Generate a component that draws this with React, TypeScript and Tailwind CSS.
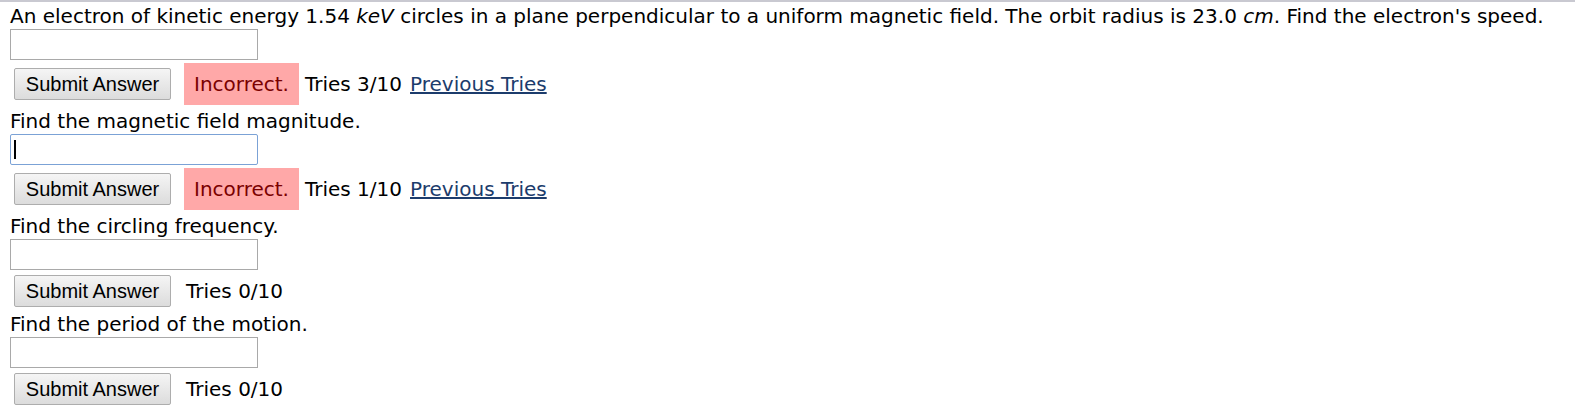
import React from "react";

type Question = {
  text: React.ReactNode;
  tries: string;
  incorrect?: boolean;
  focused?: boolean;
};

const questions: Question[] = [
  {
    text: (
      <>
        An electron of kinetic energy 1.54 <i>keV</i> circles in a plane perpendicular to a uniform
        magnetic field. The orbit radius is 23.0 <i>cm</i>. Find the electron's speed.
      </>
    ),
    tries: "3/10",
    incorrect: true,
  },
  { text: "Find the magnetic field magnitude.", tries: "1/10", incorrect: true, focused: true },
  { text: "Find the circling frequency.", tries: "0/10" },
  { text: "Find the period of the motion.", tries: "0/10" },
];

const AnswerBox = ({ focused }: { focused?: boolean }) => (
  <div
    className={`h-[31px] w-[248px] bg-white flex items-center pl-[3px] ${
      focused ? "border border-[#7ba2d6] rounded-[2px]" : "border border-[#a9a9a9]"
    }`}
  >
    {focused && <span className="block w-[2px] h-[19px] bg-black" />}
  </div>
);

const SubmitButton = () => (
  <button className="ml-[4px] h-[32px] w-[157px] border border-[#adadad] rounded-[2px] bg-gradient-to-b from-[#f5f5f5] to-[#dcdcdc] text-[20px] leading-[22px] text-black font-['Liberation_Sans',Arial,sans-serif]">
    Submit Answer
  </button>
);

export default function App() {
  return (
    <div className="min-h-screen bg-white font-['DejaVu_Sans',Verdana,sans-serif] text-[20px] text-black">
      <div className="h-[2px] bg-[#c9c9d1]" />
      <div className="pl-[10px] pt-[1px]">
        {questions.map((q, i) => (
          <div key={i}>
            <div className="leading-[26px] whitespace-nowrap">{q.text}</div>
            <AnswerBox focused={q.focused} />
            {q.incorrect ? (
              <div className="flex items-center my-[3px]">
                <SubmitButton />
                <span className="ml-[13px] h-[42px] px-[10px] flex items-center bg-[#ffa8a8] text-[#7a0000]">
                  Incorrect.
                </span>
                <span className="ml-[6px]">Tries {q.tries}</span>
                <a href="#" className="ml-[8px] text-[#1c3c6c] underline">
                  Previous Tries
                </a>
              </div>
            ) : (
              <div className="flex items-center mt-[5px] mb-[4px]">
                <SubmitButton />
                <span className="ml-[15px]">Tries {q.tries}</span>
              </div>
            )}
          </div>
        ))}
      </div>
    </div>
  );
}
